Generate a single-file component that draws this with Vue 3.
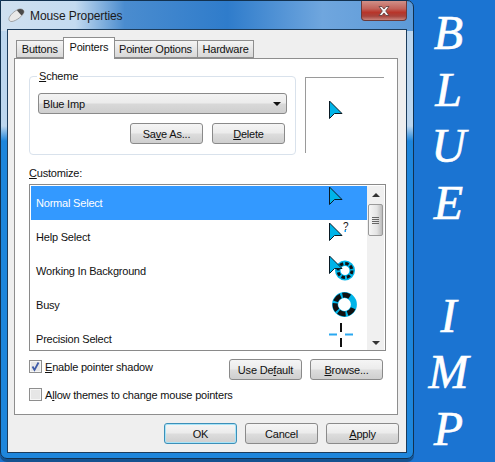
<script setup>
const tabs = [
  { name: "Buttons" },
  { name: "Pointers", active: true },
  { name: "Pointer Options" },
  { name: "Hardware" },
];

const rows = [
  { name: "Normal Select", icon: "arrow", selected: true },
  { name: "Help Select", icon: "help" },
  { name: "Working In Background", icon: "working" },
  { name: "Busy", icon: "busy" },
  { name: "Precision Select", icon: "cross" },
];

const letters = ["B", "L", "U", "E", "", "I", "M", "P"];
const arrow = "M0.5 1 L13 13.5 L5.5 13.5 L0.5 18.500 Z";
</script>

<template>
  <div class="screen">
    <div class="window">
      <div class="titlebar">
        <svg class="mouse-icon" width="18" height="16" viewBox="0 0 18 16">
          <path d="M1 13 C0 10 5 5 9 3 C12 1 16 2 16 5 C15 9 8 14 4 14.500 C2.500 14.700 1.500 14 1 13 Z" fill="#e8e8e8" stroke="#8a8a8a" stroke-width="0.7" />
          <path d="M9 3 C12 1 16 2 16 5 C15.500 6.500 14.500 7.500 13.500 8.500 L9.500 4 Z" fill="#4a4a4a" />
        </svg>
        <span class="title">Mouse Properties</span>
        <div class="close">
          <svg width="16" height="12" viewBox="0 0 16 12">
            <path d="M3 1.500 L6 1.500 L8 4 L10 1.500 L13 1.500 L9.700 6 L13 10.500 L10 10.500 L8 8 L6 10.500 L3 10.500 L6.300 6 Z" fill="#f2f2f2" stroke="#5c3a3a" stroke-width="0.8" />
          </svg>
        </div>
      </div>

      <div class="client">
        <div class="tabs">
          <div v-for="tab in tabs" :key="tab.name" class="tab" :class="{ active: tab.active }">{{ tab.name }}</div>
        </div>

        <div class="page">
          <div class="top">
            <fieldset class="scheme">
              <legend><u>S</u>cheme</legend>
              <div class="select">
                <span>Blue Imp</span>
                <i class="caret"></i>
              </div>
              <div class="scheme-btns">
                <button class="btn">Sa<u>v</u>e As...</button>
                <button class="btn"><u>D</u>elete</button>
              </div>
            </fieldset>
            <div class="preview">
              <svg class="cursor" width="15" height="20" viewBox="0 0 15 20">
                <path :d="arrow" fill="#00b4e8" stroke="#0a1a24" />
              </svg>
            </div>
          </div>

          <div class="customize"><u>C</u>ustomize:</div>
          <div class="list">
            <div class="rows">
              <div v-for="row in rows" :key="row.name" class="row" :class="{ selected: row.selected }">
                <span class="row-name">{{ row.name }}</span>
                <svg class="row-icon" width="36" height="34" viewBox="0 0 36 34">
                  <path v-if="row.icon === 'arrow'" :d="arrow" fill="#00b4e8" stroke="#0a1a24" />
                  <template v-if="row.icon === 'help'">
                    <path :d="arrow" transform="translate(0 2)" fill="#00b4e8" stroke="#0a1a24" />
                    <text x="14" y="10" font-size="10" font-family="Liberation Sans" fill="#111">?</text>
                    <rect x="15.500" y="10" width="1.500" height="2" fill="#1e9ef0" />
                  </template>
                  <template v-if="row.icon === 'working'">
                    <circle cx="16" cy="16.500" r="7.250" fill="none" stroke="#00b4e8" stroke-width="5.500" />
                    <circle cx="16" cy="16.500" r="7" fill="none" stroke="#111" stroke-width="3" stroke-dasharray="3.500 2" />
                    <path :d="arrow" transform="translate(0 1)" fill="#00b4e8" stroke="#0a1a24" />
                  </template>
                  <template v-if="row.icon === 'busy'">
                    <circle cx="15.500" cy="16.500" r="9.400" fill="none" stroke="#00b4e8" stroke-width="6" />
                    <circle cx="15.500" cy="16.500" r="9.400" fill="none" stroke="#111" stroke-width="5" stroke-dasharray="7.500 2 7.500 2 7.500 2 7.500 2 7.500 2 0 11" transform="rotate(25 15.500 16.500)" />
                  </template>
                  <template v-if="row.icon === 'cross'">
                    <path d="M12 1 V10 M12 16 V25" stroke="#111" stroke-width="2" />
                    <path d="M0 12.500 H8 M16 12.500 H24" stroke="#2aa8f0" stroke-width="2" />
                  </template>
                </svg>
              </div>
            </div>
            <div class="scrollbar">
              <i class="arrow up"></i>
              <div class="thumb"><b></b><b></b><b></b><b></b></div>
              <div class="track"></div>
              <i class="arrow down"></i>
            </div>
          </div>

          <div class="options">
            <label class="check"><span class="box on">
              <svg width="11" height="11" viewBox="0 0 11 11"><path d="M2.500 5.500 L4.500 9 L8.500 1.500" fill="none" stroke="#3d5aa8" stroke-width="1.800" /></svg>
            </span><span><u>E</u>nable pointer shadow</span></label>
            <div class="option-btns">
              <button class="btn">Use De<u>f</u>ault</button>
              <button class="btn"><u>B</u>rowse...</button>
            </div>
          </div>
          <label class="check second"><span class="box"></span><span>A<u>l</u>low themes to change mouse pointers</span></label>
        </div>

        <div class="footer">
          <button class="btn primary">OK</button>
          <button class="btn">Cancel</button>
          <button class="btn"><u>A</u>pply</button>
        </div>
      </div>
    </div>

    <div class="side">
      <span v-for="(letter, i) in letters" :key="i" class="letter">{{ letter }}</span>
    </div>
  </div>
</template>

<style scoped>
.screen {
  width: 495px;
  height: 462px;
  display: flex;
  overflow: hidden;
  font-family: "Liberation Sans", Arial, sans-serif;
  font-size: 11px;
  letter-spacing: -0.2px;
  color: #111;
  background: #1b74d2;
}

.window {
  width: 414px;
  height: 459px;
  flex: none;
  box-sizing: border-box;
  border: 1px solid #12314f;
  border-radius: 0 7px 7px 7px;
  padding: 0 6px 5px 6px;
  box-shadow: 0 3px 0 #145290;
  background:
    linear-gradient(90deg, #cfe0f0 0%, #c4dbf0 18%, #4a8ccf 30%, #2f7ccb 55%, #6fa6de 78%, #5d9ad8 100%) top / 100% 30px no-repeat,
    linear-gradient(#bcd6ee 0, #bcd6ee 125px, #1e86dc 140px);
  display: flex;
  flex-direction: column;
}

.titlebar {
  height: 28px;
  flex: none;
  display: flex;
  align-items: flex-start;
}

.mouse-icon {
  margin: 6px 4px 0 1px;
}

.title {
  margin-top: 8px;
  font-size: 12px;
  letter-spacing: -0.1px;
  color: #1a1a1a;
}

.close {
  margin-left: auto;
  width: 46px;
  height: 20px;
  box-sizing: border-box;
  border: 1px solid #6a3a3a;
  border-top: none;
  border-radius: 0 0 4px 4px;
  background: linear-gradient(#d09088 0%, #c2635a 40%, #b8352a 60%, #a8443c 80%, #c8847c 100%);
  display: flex;
  align-items: center;
  justify-content: center;
}

.client {
  flex: 1;
  border: 1px solid #1c3c5c;
  background: #efefef;
  padding: 8px 8px 8px 6px;
  display: flex;
  flex-direction: column;
  min-height: 0;
}

.tabs {
  display: flex;
  height: 20px;
  padding-left: 2px;
  align-items: flex-end;
  position: relative;
  z-index: 1;
}

.tab {
  height: 18px;
  box-sizing: border-box;
  border: 1px solid #8e8e8e;
  border-left: none;
  background: linear-gradient(#f4f4f4, #d8d8d8);
  padding: 2px 4.800px 0;
  white-space: nowrap;
}

.tab:first-child {
  border-left: 1px solid #8e8e8e;
}

.tab.active {
  height: 22px;
  margin: 0 -1px -1px -1px;
  border: 1px solid #8e8e8e;
  border-bottom: none;
  background: #fff;
  padding: 3px 6px 0;
  position: relative;
}

.page {
  height: 358px;
  box-sizing: border-box;
  border: 1px solid #8e8e8e;
  background: #fff;
  padding: 10px 13px 0 14px;
}

.top {
  display: flex;
  gap: 9px;
  height: 86px;
}

.scheme {
  width: 267px;
  height: 86px;
  box-sizing: border-box;
  margin: 0;
  border: 1px solid #d9e2ec;
  border-radius: 4px;
  padding: 10px 8px 0 8px;
  min-width: 0;
}

.scheme legend {
  padding: 0 2px;
  margin-left: -1px;
  line-height: 14px;
}

.select {
  height: 21px;
  box-sizing: border-box;
  border: 1px solid #8a8a8a;
  border-radius: 3px;
  background: linear-gradient(#f3f3f3 0%, #ececec 45%, #d8d8d8 55%, #cfcfcf 100%);
  display: flex;
  align-items: center;
  justify-content: space-between;
  padding: 0 4px;
}

.caret {
  border: 4px solid transparent;
  border-top: 4px solid #111;
  border-bottom: none;
  margin-right: 1px;
}

.scheme-btns {
  display: flex;
  justify-content: flex-end;
  gap: 9px;
  margin-top: 9px;
  padding-right: 2px;
}

.btn {
  width: 73px;
  height: 21px;
  box-sizing: border-box;
  border: 1px solid #8a8a8a;
  border-radius: 3px;
  background: linear-gradient(#f5f5f5 0%, #ececec 45%, #dcdcdc 55%, #cfcfcf 100%);
  font: inherit;
  letter-spacing: inherit;
  color: #111;
  padding: 0;
}

.btn.primary {
  border-color: #3c8fb8;
  box-shadow: inset 0 0 0 1px #a8e4f8;
}

.preview {
  width: 79px;
  height: 76px;
  box-sizing: border-box;
  border-top: 1px solid #9a9a9a;
  border-left: 1px solid #9a9a9a;
  padding: 22px 0 0 23px;
  margin-top: 8px;
}

.cursor {
  display: block;
}

.customize {
  margin-top: 11px;
  line-height: 14px;
  height: 14px;
}

.list {
  margin-top: 4px;
  width: 357px;
  height: 167px;
  box-sizing: border-box;
  border: 1px solid #8a8a8a;
  padding: 1px 1px 0 1px;
  display: flex;
  background: #fff;
  overflow: hidden;
}

.rows {
  width: 336px;
  overflow: hidden;
  flex: none;
}

.row {
  height: 34px;
  display: flex;
  align-items: center;
  justify-content: space-between;
  padding-left: 5px;
  white-space: nowrap;
}

.row.selected {
  background: #3399ff;
  color: #fff;
}

.row-icon {
  display: block;
  flex: none;
  margin-right: 2px;
}

.scrollbar {
  flex: 1;
  background: #f0f0f0;
  display: flex;
  flex-direction: column;
  align-items: center;
}

.arrow {
  flex: none;
  border: 4px solid transparent;
  margin: 7px 0;
}

.arrow.up {
  border-top: none;
  border-bottom: 4px solid #333;
}

.arrow.down {
  border-bottom: none;
  border-top: 4px solid #333;
  margin-bottom: 5px;
}

.thumb {
  width: 15px;
  height: 32px;
  box-sizing: border-box;
  border: 1px solid #9a9a9a;
  border-radius: 2px;
  background: linear-gradient(90deg, #f6f6f6, #e4e4e4 60%, #bcbcbc);
  display: flex;
  flex-direction: column;
  justify-content: center;
  align-items: center;
  gap: 1px;
}

.thumb b {
  width: 7px;
  height: 1px;
  background: #666;
}

.track {
  flex: 1;
}

.options {
  display: flex;
  align-items: flex-start;
  justify-content: space-between;
  margin-top: 8px;
  width: 354px;
}

.option-btns {
  display: flex;
  gap: 8px;
}

.check {
  display: flex;
  align-items: center;
  gap: 3px;
  margin-top: 1px;
}

.check.second {
  margin-top: 8px;
}

.box {
  width: 13px;
  height: 13px;
  box-sizing: border-box;
  border: 1px solid #8e8e8e;
  background: #e6e6e6;
  box-shadow: inset 0 0 0 1px #f6f6f6;
  display: flex;
  align-items: center;
  justify-content: center;
}

.footer {
  display: flex;
  justify-content: flex-end;
  gap: 8px;
  margin-top: 8px;
  margin-right: -1px;
}

.side {
  flex: 1;
  display: grid;
  grid-template-rows: repeat(8, 56.500px);
  padding-top: 5px;
  justify-items: center;
  padding-right: 12px;
  font-family: "Liberation Serif", serif;
  font-style: italic;
  font-size: 48px;
  line-height: 56px;
  letter-spacing: 0;
  color: #fff;
  -webkit-text-stroke: 0.6px #fff;
}

.letter {
  display: block;
}
</style>
